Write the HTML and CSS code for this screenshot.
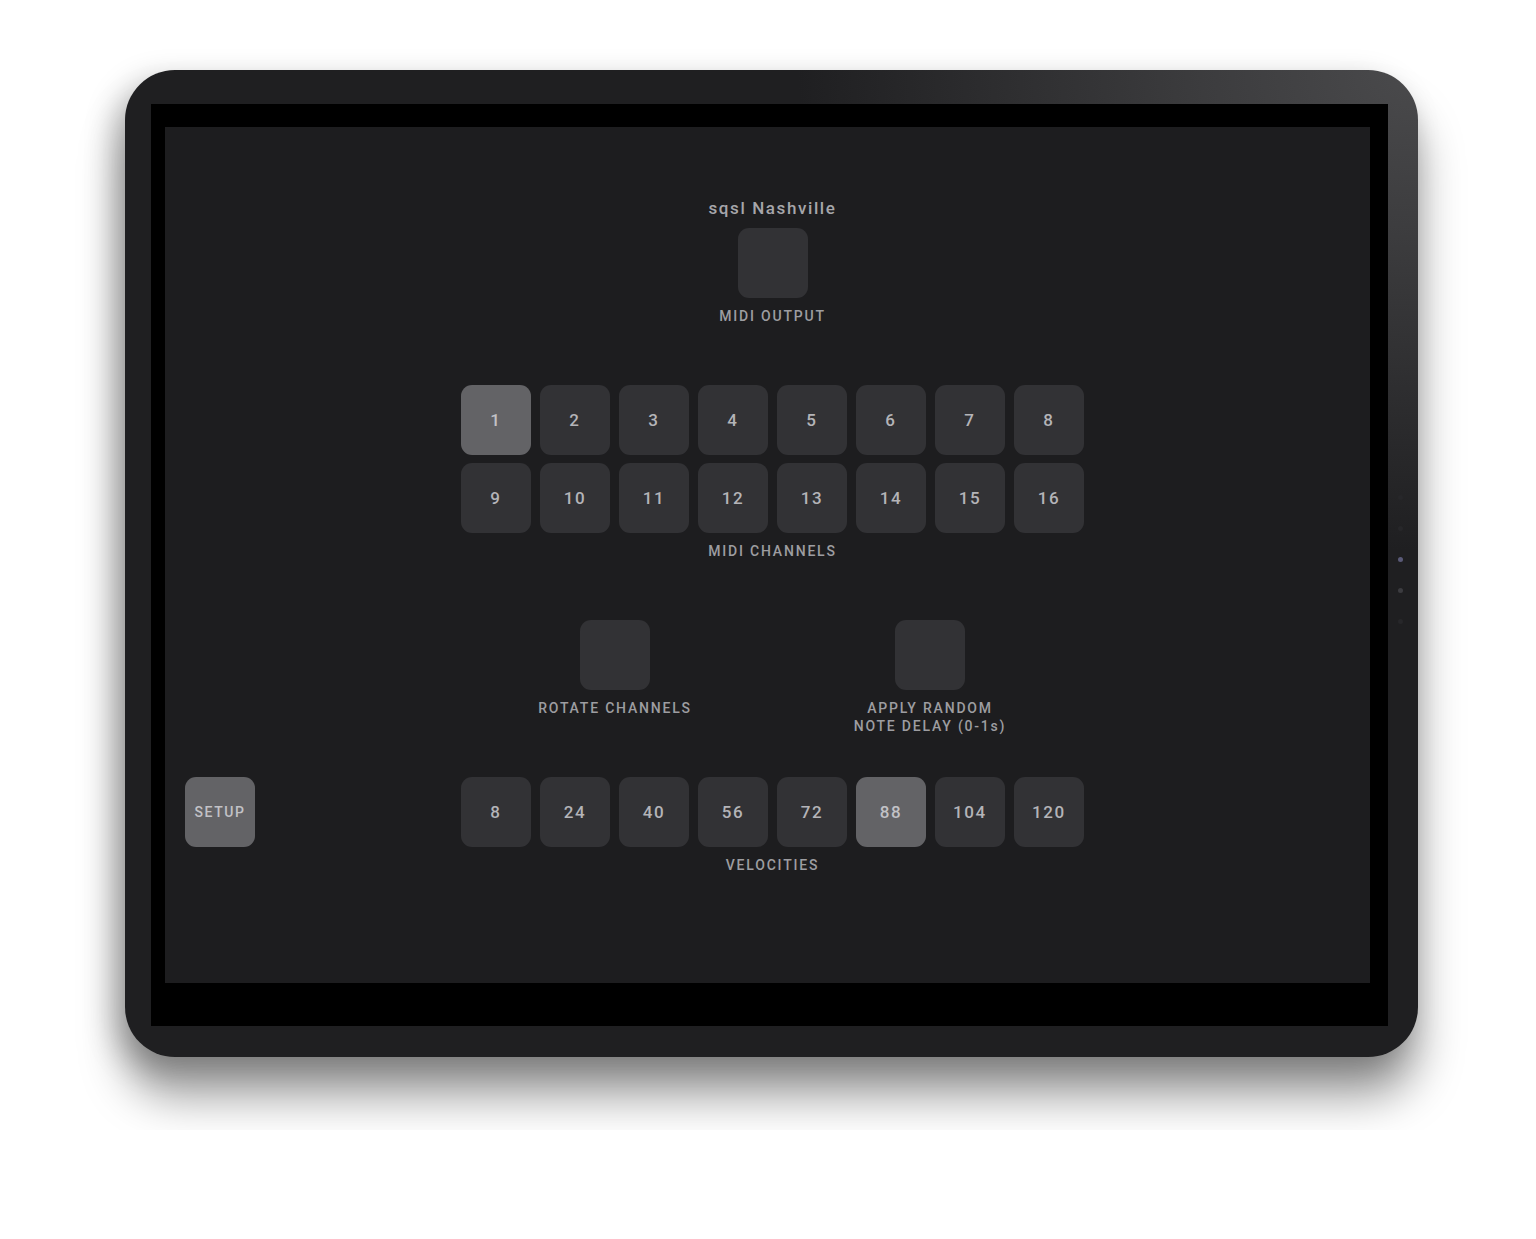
FILE: index.html
```html
<!DOCTYPE html>
<html>
<head>
<meta charset="utf-8">
<link rel="stylesheet" href="styles.css">
</head>
<body>
<div class="stage">
  <div class="device">
    <div class="side-dots">
      <span class="dot faint"></span>
      <span class="dot faint"></span>
      <span class="dot blue"></span>
      <span class="dot"></span>
      <span class="dot faint"></span>
    </div>
    <div class="bezel">
      <div class="screen">
        <div class="title">sqsl Nashville</div>
        <div class="pad"></div>
        <div class="label">MIDI OUTPUT</div>

        <div class="grid channels">
          <div class="pad on">1</div>
          <div class="pad">2</div>
          <div class="pad">3</div>
          <div class="pad">4</div>
          <div class="pad">5</div>
          <div class="pad">6</div>
          <div class="pad">7</div>
          <div class="pad">8</div>
          <div class="pad">9</div>
          <div class="pad">10</div>
          <div class="pad">11</div>
          <div class="pad">12</div>
          <div class="pad">13</div>
          <div class="pad">14</div>
          <div class="pad">15</div>
          <div class="pad">16</div>
        </div>
        <div class="label">MIDI CHANNELS</div>

        <div class="toggles">
          <div class="toggle">
            <div class="pad"></div>
            <div class="label">ROTATE CHANNELS</div>
          </div>
          <div class="toggle">
            <div class="pad"></div>
            <div class="label">APPLY RANDOM<br>NOTE DELAY (0-1s)</div>
          </div>
        </div>

        <div class="vel-row">
          <div class="setup-cell"><div class="pad on setup">SETUP</div></div>
          <div class="vel-col">
            <div class="grid velocities">
              <div class="pad">8</div>
              <div class="pad">24</div>
              <div class="pad">40</div>
              <div class="pad">56</div>
              <div class="pad">72</div>
              <div class="pad on">88</div>
              <div class="pad">104</div>
              <div class="pad">120</div>
            </div>
            <div class="label">VELOCITIES</div>
          </div>
          <div></div>
        </div>
      </div>
    </div>
  </div>
</div>
</body>
</html>
```

FILE: styles.css
```css
html, body {
  margin: 0;
  padding: 0;
  background: #ffffff;
}
body {
  width: 1536px;
  height: 1239px;
  overflow: hidden;
  font-family: Roboto, "Liberation Sans", sans-serif;
}
.stage {
  height: 1130px;
  overflow: hidden;
  padding: 70px 0 0 125px;
  box-sizing: border-box;
  background: #ffffff;
}
.device {
  position: relative;
  width: 1293px;
  height: 987px;
  box-sizing: border-box;
  padding: 34px 30px 31px 26px;
  border-radius: 50px;
  background:
    radial-gradient(ellipse 620px 480px at 100% 0%, #4a4a4c 0%, #3c3c3e 35%, rgba(32,32,34,0) 100%),
    #1f1f21;
  box-shadow: 0 40px 45px rgba(0,0,0,0.38), -10px 10px 30px rgba(0,0,0,0.25);
}
.side-dots {
  position: absolute;
  right: 15px;
  top: 425px;
  display: flex;
  flex-direction: column;
  gap: 26px;
  align-items: center;
}
.dot {
  width: 5px;
  height: 5px;
  border-radius: 50%;
  background: #3c3c40;
}
.dot.faint { background: #27272a; }
.dot.blue { background: #5a5a78; }
.bezel {
  height: 100%;
  box-sizing: border-box;
  background: #000000;
  padding: 23px 18px 43px 14px;
}
.screen {
  height: 100%;
  box-sizing: border-box;
  background: #1d1d1f;
  padding: 71px 0 0 10px;
  display: flex;
  flex-direction: column;
  align-items: center;
  color: #a3a3a7;
}
.title {
  font-size: 17px;
  line-height: 20px;
  font-weight: 500;
  letter-spacing: 1.6px;
  color: #a6a6aa;
  margin-bottom: 10px;
}
.pad {
  width: 70px;
  height: 70px;
  border-radius: 11px;
  background: #323235;
  display: flex;
  align-items: center;
  justify-content: center;
  font-size: 17px;
  font-weight: 500;
  letter-spacing: 1.6px;
  color: #b4b4b8;
  box-sizing: border-box;
}
.pad.on {
  background: #636366;
  color: #c2c2c6;
}
.label {
  font-size: 14px;
  line-height: 18px;
  font-weight: 500;
  letter-spacing: 1.8px;
  color: #9d9da1;
  margin-top: 9px;
  text-align: center;
  white-space: nowrap;
}
.grid {
  display: grid;
  grid-template-columns: repeat(8, 70px);
  column-gap: 9px;
  row-gap: 8px;
}
.channels { margin-top: 60px; }
.toggles {
  margin-top: 60px;
  display: flex;
  gap: 75px;
}
.toggle {
  width: 240px;
  display: flex;
  flex-direction: column;
  align-items: center;
}
.vel-row {
  margin-top: 42px;
  align-self: stretch;
  display: grid;
  grid-template-columns: 1fr auto 1fr;
}
.setup-cell {
  padding-left: 10px;
}
.setup {
  font-size: 14px;
  letter-spacing: 1.6px;
  color: #b6b6ba;
}
.vel-col {
  display: flex;
  flex-direction: column;
  align-items: center;
}
```
